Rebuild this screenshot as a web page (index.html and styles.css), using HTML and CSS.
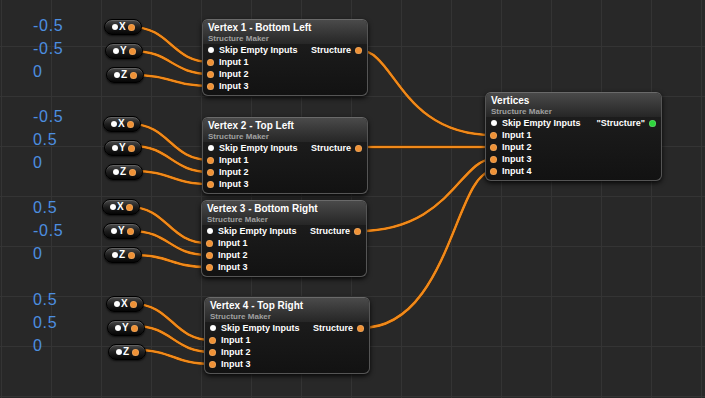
FILE: index.html
```html
<!DOCTYPE html>
<html lang="en">
<head>
    <meta charset="UTF-8">
    <title>Vertices</title>
    <link rel="stylesheet" href="styles.css">
</head>
<body>

<div class="canvas">

    <svg class="wires" width="705" height="398" viewBox="0 0 705 398">
        <g class="wire">
            <!-- group 1 -->
            <path d="M131,27 C171,27 171,62 211,62"/>
            <path d="M132,51 C172,51 171,74 211,74"/>
            <path d="M133,75 C172,75 172,86 211,86"/>
            <!-- group 2 -->
            <path d="M130,124 C170,124 170,160 210,160"/>
            <path d="M132,146 C171,146 171,172 210,172"/>
            <path d="M133,171 C172,171 171,184 210,184"/>
            <!-- group 3 -->
            <path d="M129,207 C168,207 168,243 208,243"/>
            <path d="M131,231 C170,231 169,255 208,255"/>
            <path d="M133,255 C171,255 170,267 208,267"/>
            <!-- group 4 -->
            <path d="M133,304 C172,304 172,340 212,340"/>
            <path d="M134,326 C173,326 173,352 212,352"/>
            <path d="M135,350 C174,350 173,364 212,364"/>
            <!-- into Vertices -->
            <path d="M359,50 C395,50 400,135 493,135"/>
            <path d="M359,147 L493,147"/>
            <path d="M358,231 C450,231 460,159 493,159"/>
            <path d="M361,328 C450,328 455,171 493,171"/>
        </g>
    </svg>

    <div class="values v1"><div>-0.5</div><div>-0.5</div><div>0</div></div>
    <div class="values v2"><div>-0.5</div><div>0.5</div><div>0</div></div>
    <div class="values v3"><div>0.5</div><div>-0.5</div><div>0</div></div>
    <div class="values v4"><div>0.5</div><div>0.5</div><div>0</div></div>

    <div class="pills p1">
        <div class="pill"><span class="dot white"></span><b>X</b><span class="dot orange"></span></div>
        <div class="pill"><span class="dot white"></span><b>Y</b><span class="dot orange"></span></div>
        <div class="pill"><span class="dot white"></span><b>Z</b><span class="dot orange"></span></div>
    </div>
    <div class="pills p2">
        <div class="pill"><span class="dot white"></span><b>X</b><span class="dot orange"></span></div>
        <div class="pill"><span class="dot white"></span><b>Y</b><span class="dot orange"></span></div>
        <div class="pill"><span class="dot white"></span><b>Z</b><span class="dot orange"></span></div>
    </div>
    <div class="pills p3">
        <div class="pill"><span class="dot white"></span><b>X</b><span class="dot orange"></span></div>
        <div class="pill"><span class="dot white"></span><b>Y</b><span class="dot orange"></span></div>
        <div class="pill"><span class="dot white"></span><b>Z</b><span class="dot orange"></span></div>
    </div>
    <div class="pills p4">
        <div class="pill"><span class="dot white"></span><b>X</b><span class="dot orange"></span></div>
        <div class="pill"><span class="dot white"></span><b>Y</b><span class="dot orange"></span></div>
        <div class="pill"><span class="dot white"></span><b>Z</b><span class="dot orange"></span></div>
    </div>

    <div class="node n1">
        <div class="head"><div class="title">Vertex 1 - Bottom Left</div><div class="sub">Structure Maker</div></div>
        <div class="row"><span class="dot white"></span><span class="label">Skip Empty Inputs</span><span class="out">Structure</span><span class="dot orange"></span></div>
        <div class="row"><span class="dot orange"></span><span class="label">Input 1</span></div>
        <div class="row"><span class="dot orange"></span><span class="label">Input 2</span></div>
        <div class="row"><span class="dot orange"></span><span class="label">Input 3</span></div>
    </div>

    <div class="node n2">
        <div class="head"><div class="title">Vertex 2 - Top Left</div><div class="sub">Structure Maker</div></div>
        <div class="row"><span class="dot white"></span><span class="label">Skip Empty Inputs</span><span class="out">Structure</span><span class="dot orange"></span></div>
        <div class="row"><span class="dot orange"></span><span class="label">Input 1</span></div>
        <div class="row"><span class="dot orange"></span><span class="label">Input 2</span></div>
        <div class="row"><span class="dot orange"></span><span class="label">Input 3</span></div>
    </div>

    <div class="node n3">
        <div class="head"><div class="title">Vertex 3 - Bottom Right</div><div class="sub">Structure Maker</div></div>
        <div class="row"><span class="dot white"></span><span class="label">Skip Empty Inputs</span><span class="out">Structure</span><span class="dot orange"></span></div>
        <div class="row"><span class="dot orange"></span><span class="label">Input 1</span></div>
        <div class="row"><span class="dot orange"></span><span class="label">Input 2</span></div>
        <div class="row"><span class="dot orange"></span><span class="label">Input 3</span></div>
    </div>

    <div class="node n4">
        <div class="head"><div class="title">Vertex 4 - Top Right</div><div class="sub">Structure Maker</div></div>
        <div class="row"><span class="dot white"></span><span class="label">Skip Empty Inputs</span><span class="out">Structure</span><span class="dot orange"></span></div>
        <div class="row"><span class="dot orange"></span><span class="label">Input 1</span></div>
        <div class="row"><span class="dot orange"></span><span class="label">Input 2</span></div>
        <div class="row"><span class="dot orange"></span><span class="label">Input 3</span></div>
    </div>

    <div class="node vertices">
        <div class="head"><div class="title">Vertices</div><div class="sub">Structure Maker</div></div>
        <div class="row"><span class="dot white"></span><span class="label">Skip Empty Inputs</span><span class="out">"Structure"</span><span class="dot green"></span></div>
        <div class="row"><span class="dot orange"></span><span class="label">Input 1</span></div>
        <div class="row"><span class="dot orange"></span><span class="label">Input 2</span></div>
        <div class="row"><span class="dot orange"></span><span class="label">Input 3</span></div>
        <div class="row"><span class="dot orange"></span><span class="label">Input 4</span></div>
    </div>

</div>

</body>
</html>
```

FILE: styles.css
```css
* {
    margin: 0;
    padding: 0;
    box-sizing: border-box;
}

body {
    background: #282828;
    font-family: "Liberation Sans", Arial, sans-serif;
}

.canvas {
    position: relative;
    width: 705px;
    height: 398px;
    overflow: hidden;
    background-color: #282828;
    background-image:
        linear-gradient(#343434 1px, transparent 1px),
        linear-gradient(90deg, #343434 1px, transparent 1px);
    background-size: 50px 50px;
    background-position: 1px 46px;
}

/* wires */
.wires {
    position: absolute;
    left: 0;
    top: 0;
}

.wire path {
    fill: none;
    stroke: #f0891a;
    stroke-width: 2.6;
    filter: drop-shadow(0 0 0.7px #1a0c00) drop-shadow(0 0 0.5px #000);
}

/* number labels */
.values {
    position: absolute;
    left: 33px;
    color: #4d8fe0;
    font-size: 16px;
    line-height: 23px;
    letter-spacing: 0.7px;
}

.v1 { top: 14px; }
.v2 { top: 105px; }
.v3 { top: 196px; }
.v4 { top: 288px; }

/* value pills */
.pills {
    position: absolute;
    display: flex;
    flex-direction: column;
    gap: 8px;
}

.p1 { left: 104px; top: 19px; }
.p2 { left: 103px; top: 116px; }
.p3 { left: 102px; top: 199px; }
.p4 { left: 106px; top: 296px; }

.pill {
    display: flex;
    align-items: center;
    width: 38px;
    height: 16px;
    padding: 0 6px 0 6px;
    border: 1px solid #000;
    border-radius: 8px;
    background: linear-gradient(#4a4a4a, #1e1e1e 50%, #050505);
    box-shadow: inset 0 1px 0 rgba(255, 255, 255, 0.15), 0 1px 2px rgba(0, 0, 0, 0.7);
}

.pill b {
    flex: 1;
    color: #fff;
    font-size: 10px;
    line-height: 14px;
    padding-left: 1px;
}

.pills .pill:nth-child(2) { margin-left: 1px; }
.pills .pill:nth-child(3) { margin-left: 2px; }

/* ports */
.dot {
    display: block;
    width: 7px;
    height: 7px;
    border-radius: 50%;
    flex: none;
}

.dot.white {
    width: 6px;
    height: 6px;
    margin: 0 0.5px;
    background: radial-gradient(#ffffff 55%, #cfcfcf);
}

.dot.orange {
    background: radial-gradient(#ef9237 45%, #f7c48c);
}

.dot.green {
    background: radial-gradient(#2fd53d 45%, #9af0a0);
}

/* patches */
.node {
    position: absolute;
    width: 166px;
    padding-bottom: 3px;
    border: 1px solid #555;
    border-top-color: #6a6a6a;
    border-radius: 6px;
    background: linear-gradient(#202020, #121212);
    box-shadow: 0 2px 5px rgba(0, 0, 0, 0.85);
    overflow: hidden;
}

.n1 { left: 202px; top: 19px; }
.n2 { left: 202px; top: 117px; }
.n3 { left: 201px; top: 200px; }
.n4 { left: 204px; top: 297px; }

.vertices {
    left: 485px;
    top: 92px;
    width: 177px;
}

.head {
    height: 24px;
    padding: 2px 0 0 5px;
    background: linear-gradient(#4a4a4a, #363636 55%, #262626);
}

.title {
    color: #fff;
    font-size: 10px;
    font-weight: bold;
    line-height: 12px;
}

.sub {
    color: #a0a0a0;
    font-size: 8px;
    font-weight: bold;
    line-height: 9px;
}

.row {
    display: flex;
    align-items: center;
    height: 12px;
    padding: 0 5px 0 4px;
    color: #fff;
    font-size: 9px;
    font-weight: bold;
}

.row .label {
    flex: 1;
    margin-left: 5px;
}

.row .out {
    margin-right: 4px;
}
```
